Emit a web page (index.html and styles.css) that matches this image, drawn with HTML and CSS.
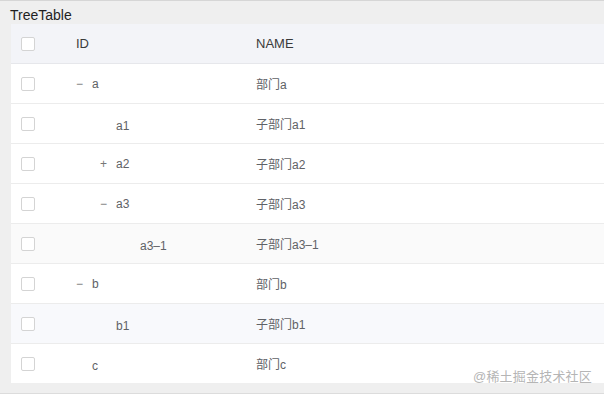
FILE: index.html
```html
<!DOCTYPE html>
<html lang="zh">
<head>
<meta charset="utf-8">
<link rel="stylesheet" href="styles.css">
</head>
<body>
<div class="page">
  <div class="title">TreeTable</div>
  <div class="table">
    <div class="row head">
      <div class="cell chk"><span class="box"></span></div>
      <div class="cell id">ID</div>
      <div class="cell name">NAME</div>
    </div>
    <div class="row">
      <div class="cell chk"><span class="box"></span></div>
      <div class="cell id"><span class="tree l1"><span class="tog">−</span>a</span></div>
      <div class="cell name">部门a</div>
    </div>
    <div class="row">
      <div class="cell chk"><span class="box"></span></div>
      <div class="cell id"><span class="tree l2"><span class="tog"></span>a1</span></div>
      <div class="cell name">子部门a1</div>
    </div>
    <div class="row">
      <div class="cell chk"><span class="box"></span></div>
      <div class="cell id"><span class="tree l2"><span class="tog">+</span>a2</span></div>
      <div class="cell name">子部门a2</div>
    </div>
    <div class="row">
      <div class="cell chk"><span class="box"></span></div>
      <div class="cell id"><span class="tree l2"><span class="tog">−</span>a3</span></div>
      <div class="cell name">子部门a3</div>
    </div>
    <div class="row alt">
      <div class="cell chk"><span class="box"></span></div>
      <div class="cell id"><span class="tree l3"><span class="tog"></span>a3–1</span></div>
      <div class="cell name">子部门a3–1</div>
    </div>
    <div class="row">
      <div class="cell chk"><span class="box"></span></div>
      <div class="cell id"><span class="tree l1"><span class="tog">−</span>b</span></div>
      <div class="cell name">部门b</div>
    </div>
    <div class="row alt2">
      <div class="cell chk"><span class="box"></span></div>
      <div class="cell id"><span class="tree l2"><span class="tog"></span>b1</span></div>
      <div class="cell name">子部门b1</div>
    </div>
    <div class="row last">
      <div class="cell chk"><span class="box"></span></div>
      <div class="cell id"><span class="tree l1"><span class="tog"></span>c</span></div>
      <div class="cell name">部门c</div>
    </div>
  </div>
  <div class="watermark">@稀土掘金技术社区</div>
</div>
</body>
</html>
```

FILE: styles.css
```css
* { box-sizing: border-box; }
html, body { margin: 0; padding: 0; }
body {
  width: 604px;
  height: 394px;
  background: #efefef;
  font-family: "Liberation Sans", "Noto Sans CJK SC", sans-serif;
  overflow: hidden;
}
.page {
  position: relative;
  height: 394px;
  border-top: 1px solid #d6d6d6;
  border-bottom: 1px solid #dcdcdc;
  padding-left: 11px;
}
.title {
  height: 23px;
  line-height: 28px;
  font-size: 14px;
  color: #1f1f1f;
  margin-left: -1px;
}
.table {
  background: #fff;
}
.row {
  display: flex;
  height: 40px;
  align-items: center;
  border-bottom: 1px solid #ececec;
  font-size: 12px;
  color: #606266;
}
.row.last { border-bottom: none; height: 39px; }
.row.head {
  background: #f3f4f8;
  color: #3a3a3a;
  font-size: 13px;
  border-bottom: 1px solid #e6e7eb;
}
.row.alt { background: #fafafa; }
.row.alt2 { background: #f8f9fc; }
.cell { padding-left: 10px; }
.chk { width: 55px; display: flex; align-items: center; }
.id { width: 180px; }
.name { flex: 1; }
.box {
  display: block;
  width: 14px;
  height: 14px;
  border: 1px solid #d4d4d4;
  border-radius: 2px;
  background: #fff;
}
.tree { display: inline-flex; align-items: center; }
.tog {
  display: inline-block;
  width: 16px;
  color: #777;
}
.l1 { padding-left: 0; }
.l2 { padding-left: 24px; }
.l3 { padding-left: 48px; }
.watermark {
  position: absolute;
  right: 12px;
  top: 365px;
  font-size: 13px;
  color: #b5b5b5;
  letter-spacing: 0.2px;
}
```
